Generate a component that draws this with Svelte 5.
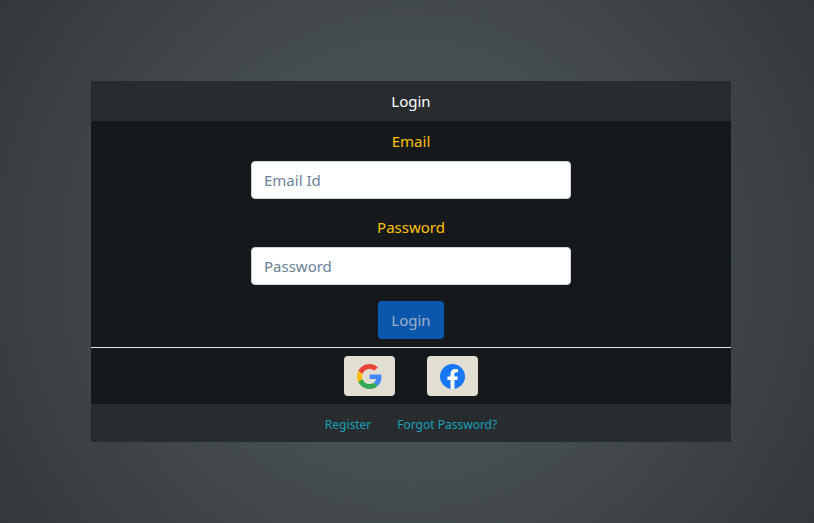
<script>
  let email = $state("");
  let password = $state("");
</script>

<div class="page">
  <div class="card">
    <div class="card-header">Login</div>
    <form class="card-body" onsubmit={(e) => e.preventDefault()}>
      <label class="field-label" for="email">Email</label>
      <input id="email" class="control" type="text" placeholder="Email Id" bind:value={email} />
      <label class="field-label second" for="password">Password</label>
      <input id="password" class="control" type="password" placeholder="Password" bind:value={password} />
      <button class="btn-login" type="submit">Login</button>
    </form>
    <hr />
    <div class="social">
      <button class="btn-social" type="button" aria-label="Google">
        <svg viewBox="0 0 48 48" width="25" height="25">
          <path fill="#EA4335" d="M24 9.5c3.54 0 6.71 1.22 9.21 3.6l6.85-6.85C35.9 2.38 30.47 0 24 0 14.62 0 6.51 5.38 2.56 13.22l7.98 6.19C12.43 13.72 17.74 9.5 24 9.5z"/>
          <path fill="#4285F4" d="M46.98 24.55c0-1.57-.15-3.09-.38-4.55H24v9.02h12.94c-.58 2.96-2.26 5.48-4.78 7.18l7.73 6c4.51-4.18 7.09-10.36 7.09-17.65z"/>
          <path fill="#FBBC05" d="M10.53 28.59c-.48-1.45-.76-2.99-.76-4.59s.27-3.14.76-4.59l-7.98-6.19C.92 16.46 0 20.12 0 24c0 3.88.92 7.54 2.56 10.78l7.97-6.19z"/>
          <path fill="#34A853" d="M24 48c6.48 0 11.93-2.13 15.89-5.81l-7.73-6c-2.15 1.45-4.92 2.3-8.16 2.3-6.26 0-11.57-4.22-13.47-9.91l-7.98 6.19C6.51 42.62 14.62 48 24 48z"/>
        </svg>
      </button>
      <button class="btn-social" type="button" aria-label="Facebook">
        <svg viewBox="0 0 24 24" width="25" height="25">
          <circle cx="12" cy="12" r="12" fill="#1877F2"/>
          <path fill="#fff" d="M16.67 15.47 17.2 12h-3.33V9.75c0-.95.47-1.87 1.95-1.87h1.51V4.92s-1.37-.23-2.69-.23c-2.74 0-4.53 1.66-4.53 4.67V12H7.08v3.47h3.03v8.39a12 12 0 0 0 3.76 0v-8.39h2.8z"/>
        </svg>
      </button>
    </div>
    <div class="card-footer">
      <a href="#register">Register</a>
      <a href="#forgot">Forgot Password?</a>
    </div>
  </div>
</div>

<style>
  :global(body) {
    margin: 0;
    font-family: "Noto Sans", "Open Sans", sans-serif;
  }

  .page {
    box-sizing: border-box;
    height: 523px;
    padding-left: 8px;
    display: flex;
    align-items: center;
    justify-content: center;
    background: radial-gradient(circle at center, #555e60 0%, #33383b 100%);
  }

  .card {
    width: 640px;
    background: #15191c;
    font-size: 15px;
    line-height: 24px;
  }

  .card-header {
    padding: 8px 16px;
    text-align: center;
    color: #fff;
    background: #282c2f;
  }

  .card-body {
    padding: 8px 16px;
    display: flex;
    flex-direction: column;
    align-items: center;
  }

  .field-label {
    margin-bottom: 8px;
    color: #ffc107;
  }

  .second {
    margin-top: 16px;
  }

  .control {
    box-sizing: border-box;
    width: 320px;
    height: 38px;
    padding: 6px 12px;
    border: 1px solid #ced4da;
    border-radius: 4px;
    background: #fff;
    font: inherit;
    color: #495057;
  }

  .control::placeholder {
    color: #6c8297;
    opacity: 1;
  }

  .btn-login {
    box-sizing: border-box;
    width: 66px;
    height: 38px;
    margin-top: 16px;
    padding: 0;
    border: 0;
    border-radius: 4px;
    background: #0b57ad;
    color: #9fb1c8;
    font: inherit;
  }

  hr {
    height: 1px;
    margin: 0;
    border: 0;
    background: #e6e6e6;
  }

  .social {
    display: flex;
    justify-content: center;
    gap: 32px;
    padding: 8px 0;
  }

  .btn-social {
    width: 51px;
    height: 40px;
    padding: 0;
    border: 0;
    border-radius: 4px;
    background: #e2dfd2;
    display: flex;
    align-items: center;
    justify-content: center;
  }

  .card-footer {
    display: flex;
    justify-content: center;
    gap: 26px;
    padding: 10px 16px 6px;
    font-size: 12px;
    line-height: 22px;
    background: #282c2f;
  }

  .card-footer a {
    color: #17a2b8;
    text-decoration: none;
  }
</style>
